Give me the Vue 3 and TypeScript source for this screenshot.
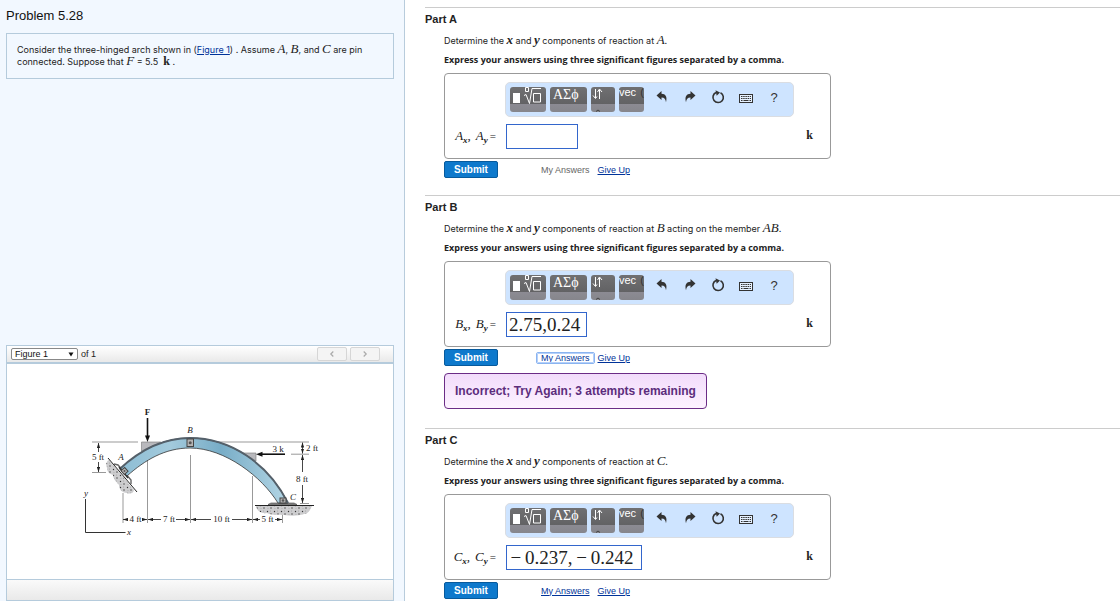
<script setup lang="ts">
import { reactive, ref } from 'vue'

interface Part {
  id: string
  member: string
  suffix: string
  answer: string
  fieldWidth: number
  answersState: 'disabled' | 'focused' | 'link'
  feedback: string
}

const parts = reactive<Part[]>([
  { id: 'A', member: '', suffix: '', answer: '', fieldWidth: 72, answersState: 'disabled', feedback: '' },
  {
    id: 'B',
    member: 'AB',
    suffix: ' acting on the member ',
    answer: '2.75,0.24',
    fieldWidth: 81,
    answersState: 'focused',
    feedback: 'Incorrect; Try Again; 3 attempts remaining',
  },
  { id: 'C', member: '', suffix: '', answer: '−\u20090.237,\u2009−\u20090.242', fieldWidth: 136, answersState: 'link', feedback: '' },
])

const figure = ref('Figure 1')
</script>

<template>
  <div class="page">
    <aside class="problem">
      <h1>Problem 5.28</h1>
      <p class="statement">
        Consider the three-hinged arch shown in (<a href="#figure">Figure 1</a>) . Assume <i class="m">A</i>,
        <i class="m">B</i>, and <i class="m">C</i> are pin connected. Suppose that <i class="m">F</i> = 5.5&nbsp;
        <span class="unit">k</span> .
      </p>

      <section id="figure" class="figure">
        <header class="figure-bar">
          <span class="picker">
            <select v-model="figure" aria-label="Figure">
              <option>Figure 1</option>
            </select>
            <svg class="caret" width="6" height="5" viewBox="0 0 6 5"><path d="M0.5 0.5h5L3 4.5z" fill="#111" /></svg>
          </span>
          <span class="count">of 1</span>
          <button type="button" class="step" aria-label="Previous figure">
            <svg width="6" height="8" viewBox="0 0 6 8"><path d="M4.3 1.5L1.8 4l2.5 2.5" /></svg>
          </button>
          <button type="button" class="step" aria-label="Next figure">
            <svg width="6" height="8" viewBox="0 0 6 8"><path d="M1.7 1.5L4.2 4 1.7 6.5" /></svg>
          </button>
        </header>

        <div class="figure-body">
          <svg class="arch" width="240" height="140" viewBox="80 402 240 140">
            <defs>
              <linearGradient id="steel" x1="0" x2="1" y1="0" y2="0">
                <stop offset="0" stop-color="#8dbdd4" />
                <stop offset="0.3" stop-color="#a3cadc" />
                <stop offset="0.6" stop-color="#78adc7" />
                <stop offset="1" stop-color="#b4d6e5" />
              </linearGradient>
              <pattern id="soil" width="7" height="6" patternUnits="userSpaceOnUse">
                <rect width="7" height="6" fill="#cdcdcf" />
                <circle cx="1.5" cy="1.5" r="0.7" fill="#333" />
                <circle cx="5" cy="4" r="0.8" fill="#555" />
                <circle cx="4.5" cy="1" r="0.4" fill="#777" />
                <circle cx="2" cy="4.5" r="0.4" fill="#888" />
              </pattern>
              <marker id="tip" viewBox="0 0 6 4" refX="6" refY="2" markerWidth="5" markerHeight="3.4" markerUnits="userSpaceOnUse" orient="auto-start-reverse">
                <path d="M0 0L6 2 0 4z" fill="#222" />
              </marker>
            </defs>

            <!-- reference lines -->
            <g stroke="#999" stroke-width="1" fill="none">
              <path d="M92 442h46M92 472.5h14M215 442h94M291 454.2h18M300 503.5h9" />
              <path d="M123 493v30M147.5 455v68M190.5 455v68M252.5 476v47M282.5 515v8" />
            </g>

            <!-- load brackets -->
            <path d="M141.500 442h19l-19 9z" fill="#b9b9bd" stroke="#777" stroke-width="0.6" />
            <path d="M243 453h13v8z" fill="#b9b9bd" stroke="#777" stroke-width="0.6" />

            <!-- ground at A -->
            <path d="M109 460c-3 1-3 5-2 8c0 4 3 6 6 7c1 6 4 7 6 10c0 5 4 8 8 8c3 1 6 1 7-3z" fill="url(#soil)" />
            <path d="M108 458l29 34" stroke="#222" stroke-width="1" />
            <path d="M114 464l4 1 13 15 0 4" fill="none" stroke="#666" stroke-width="1.4" />

            <!-- ground at C -->
            <path d="M256 506c1 5 5 8 11 7c6 3 12 1 17 2c8 1 14 1 20-1c4 0 6-4 8-8z" fill="url(#soil)" />
            <path d="M255 505.500h59" stroke="#222" stroke-width="1.2" />
            <path d="M268 504.500l3-1.500h23l3 1.500z" fill="#888" stroke="#444" stroke-width="0.6" />

            <!-- arch ring -->
            <path
              d="M119.700 469C140 450 163 438 190 438C230 438 268 463 288 503H278C262 477 225 448 190 448C165 448 145 460 127 476z"
              fill="url(#steel)" stroke="#333" stroke-width="0.8"
            />
            <path d="M119.700 469C140 450 163 438 190 438C230 438 268 463 288 503" fill="none" stroke="#54606a" stroke-width="2" />
            <path d="M119 467L128 478" stroke="#333" stroke-width="1.4" />

            <!-- hinges -->
            <g fill="#b4b4b4" stroke="#444" stroke-width="1">
              <rect x="187" y="439" width="6.500" height="7.500" />
              <rect x="122" y="468.500" width="5" height="5" transform="rotate(48 124.500 471)" />
              <rect x="280" y="498" width="6" height="5" />
            </g>
            <g fill="#555">
              <circle cx="190.200" cy="442.700" r="1.500" />
              <circle cx="124.500" cy="471" r="1" />
              <circle cx="283" cy="500.500" r="1.300" />
            </g>

            <!-- loads -->
            <path d="M147.500 418v19" stroke="#111" stroke-width="1.600" />
            <path d="M145 435.500h5l-2.500 6.500z" fill="#111" />
            <path d="M285 454.200h-24" stroke="#111" stroke-width="1.600" />
            <path d="M262.500 451.700v5l-6.500-2.500z" fill="#111" />

            <!-- dimensions -->
            <g stroke="#333" stroke-width="0.9" fill="none">
              <path d="M98.500 452v-9" marker-end="url(#tip)" />
              <path d="M98.500 462v10" marker-end="url(#tip)" />
              <path d="M302.500 442.500v11" marker-start="url(#tip)" marker-end="url(#tip)" />
              <path d="M302.500 472v-17" marker-end="url(#tip)" />
              <path d="M302.500 485v18" marker-end="url(#tip)" />
              <path d="M128 519.500h-5" marker-end="url(#tip)" />
              <path d="M142 519.500h5" marker-end="url(#tip)" />
              <path d="M161 519.500h-13" marker-end="url(#tip)" />
              <path d="M176 519.500h14" marker-end="url(#tip)" />
              <path d="M211 519.500h-20" marker-end="url(#tip)" />
              <path d="M232 519.500h20" marker-end="url(#tip)" />
              <path d="M260 519.500h-7" marker-end="url(#tip)" />
              <path d="M275 519.500h7" marker-end="url(#tip)" />
            </g>

            <path d="M85.500 499v33.500h40" fill="none" stroke="#333" stroke-width="1" />

            <g class="labels">
              <text x="147.500" y="415" class="b">F</text>
              <text x="190" y="433" class="i">B</text>
              <text x="121" y="460" class="i">A</text>
              <text x="293" y="500" class="i">C</text>
              <text x="86" y="496" class="i">y</text>
              <text x="129" y="535" class="i">x</text>
              <text x="98" y="460">5 ft</text>
              <text x="278" y="452">3 k</text>
              <text x="312" y="451">2 ft</text>
              <text x="302" y="482">8 ft</text>
              <text x="135.500" y="522">4 ft</text>
              <text x="169" y="522">7 ft</text>
              <text x="221.500" y="522">10 ft</text>
              <text x="267.500" y="522">5 ft</text>
            </g>
          </svg>
        </div>
        <footer class="figure-foot"></footer>
      </section>
    </aside>

    <main class="parts">
      <section v-for="part in parts" :key="part.id" class="part">
        <h2>Part {{ part.id }}</h2>
        <p class="ask">
          Determine the <i class="m v">x</i> and <i class="m v">y</i> components of reaction at
          <i class="m">{{ part.id }}</i>{{ part.suffix }}<i v-if="part.member" class="m">{{ part.member }}</i>.
        </p>
        <p class="ask strong">Express your answers using three significant figures separated by a comma.</p>

        <form class="answer" @submit.prevent>
          <div class="box">
            <div class="toolbar">
              <button type="button" class="tile root" aria-label="Templates">
                <svg width="36" height="25" viewBox="0 0 36 25">
                  <rect x="3" y="6" width="7" height="10" fill="#fff" />
                  <path d="M14 8.500l2-1 3.500 9L22 1.500h9" fill="none" stroke="#fff" stroke-width="1" />
                  <path d="M15.500 0.500h3v4h-3zM23.500 6.500h7v8.500h-7z" fill="none" stroke="#fff" stroke-width="1" />
                </svg>
              </button>
              <button type="button" class="tile greek">ΑΣϕ</button>
              <button type="button" class="tile arrows" aria-label="Subscripts and arrows">
                <svg width="24" height="25" viewBox="0 0 24 25">
                  <g fill="none" stroke="#fff" stroke-width="1">
                    <path d="M4.500 2v9M2 8.500l2.500 3 1.500-2M8.500 12V3M6.500 5l2-3 2.500 3" />
                  </g>
                  <path d="M5 24.500l2-1.500 2 1.500" fill="none" stroke="#444" />
                </svg>
              </button>
              <button type="button" class="tile vec">vec <span>(</span></button>
              <button type="button" class="tool" aria-label="Undo">
                <svg width="14" height="14" viewBox="0 0 14 14">
                  <path d="M1.500 5.500L6.500 1v2.800C10.500 4 12.500 6.500 11 12.200C10.600 9 9.500 7.500 6.500 7.400V10z" fill="#333" />
                </svg>
              </button>
              <button type="button" class="tool" aria-label="Redo">
                <svg width="14" height="14" viewBox="0 0 14 14">
                  <path d="M12.500 5.500L7.500 1v2.800C3.500 4 1.500 6.500 3 12.200C3.400 9 4.500 7.500 7.500 7.400V10z" fill="#333" />
                </svg>
              </button>
              <button type="button" class="tool" aria-label="Reset">
                <svg width="14" height="14" viewBox="0 0 14 14">
                  <path d="M9.500 2.700A5.200 5.200 0 1 1 5 2.600" fill="none" stroke="#333" stroke-width="1.600" />
                  <path d="M4.500 0.200L9 2.400 5.700 5.800z" fill="#333" />
                </svg>
              </button>
              <button type="button" class="tool" aria-label="Keyboard">
                <svg width="16" height="14" viewBox="0 0 16 14">
                  <rect x="1.500" y="4.500" width="13" height="8" fill="#e6f1ff" stroke="#333" />
                  <path d="M3 6.500h10M3 8.500h10" stroke="#333" stroke-width="1" stroke-dasharray="1.500 0.700" />
                  <path d="M3 10.500h1.500M5.500 10.500h5M11.500 10.500h1.500" stroke="#333" />
                </svg>
              </button>
              <button type="button" class="tool help">?</button>
            </div>

            <div class="entry">
              <label :for="'answer-' + part.id">
                <i>{{ part.id }}<sub>x</sub></i><span class="comma">,</span>
                <i>{{ part.id }}<sub>y</sub></i><span class="eq">=</span>
              </label>
              <input :id="'answer-' + part.id" v-model="part.answer" type="text" :style="{ width: part.fieldWidth + 'px' }" />
              <span class="unit">k</span>
            </div>
          </div>

          <div class="actions">
            <button type="submit" class="submit">Submit</button>
            <span v-if="part.answersState === 'disabled'" class="mine off">My Answers</span>
            <a v-else href="#answers" class="mine" :class="{ focused: part.answersState === 'focused' }">My Answers</a>
            <a href="#giveup">Give Up</a>
          </div>
        </form>

        <p v-if="part.feedback" class="feedback" role="status">{{ part.feedback }}</p>
      </section>
    </main>
  </div>
</template>

<style>
body {
  margin: 0;
  background: #fff;
}
</style>

<style scoped>
.page {
  display: grid;
  grid-template-columns: 405px 1fr;
  min-height: 100vh;
  font-family: "Liberation Sans", Arial, sans-serif;
  font-size: 9px;
  color: #222;
}
h1, h2, p {
  margin: 0;
}
button, input, select {
  font-family: inherit;
  box-sizing: border-box;
}
a {
  color: #039;
}
.problem {
  display: flex;
  flex-direction: column;
  box-sizing: border-box;
  padding: 8px 10px 0 6px;
  background: #f2f8ff;
  border-right: 1px solid #b8ccdc;
}
h1 {
  font-size: 13px;
  line-height: 15px;
  font-weight: 400;
  color: #111;
}
.statement, .ask {
  font-family: Inter, "Liberation Sans", sans-serif;
  font-size: 9px;
}
.statement {
  margin-top: 10px;
  padding: 10px 20px 10px 10px;
  border: 1px solid #b5cbdc;
  line-height: 12px;
}
.m {
  font-family: "Liberation Serif", serif;
  font-size: 13px;
  line-height: 10px;
}
.v {
  font-weight: 700;
}
.unit {
  font-family: "Liberation Serif", serif;
  font-size: 12px;
  line-height: 10px;
  font-weight: 700;
}
.figure {
  margin-top: auto;
  border: 1px solid #b5cbdc;
}
.figure-bar {
  display: flex;
  align-items: center;
  gap: 3px;
  height: 16px;
  padding: 0 13px 0 4px;
  background: linear-gradient(#fff, #e9e9e9);
  border-bottom: 2px solid #b5cbdc;
}
.picker {
  display: grid;
  align-items: center;
}
.picker > * {
  grid-area: 1 / 1;
}
.picker select {
  appearance: none;
  width: 67px;
  height: 12px;
  padding: 0 3px;
  border: 1px solid #888;
  border-radius: 2px;
  background: #fff;
  color: #111;
  font-size: 9px;
  line-height: 10px;
}
.caret {
  justify-self: end;
  margin-right: 4px;
  pointer-events: none;
}
.count {
  flex: 1;
}
.step {
  display: flex;
  align-items: center;
  justify-content: center;
  width: 30px;
  height: 14px;
  padding: 0;
  border: 1px solid #d6d6d6;
  border-radius: 2px;
  background: #f4f4f4;
}
.step path {
  fill: none;
  stroke: #aaa;
  stroke-width: 1.2;
}
.figure-body {
  display: flex;
  align-items: center;
  justify-content: center;
  height: 215px;
  background: #fff;
  border-bottom: 1px solid #b5cbdc;
}
.figure-foot {
  height: 20px;
  background: linear-gradient(#fafafa, #e9e9e9);
}
.labels {
  font-family: "Liberation Serif", serif;
  font-size: 9px;
  fill: #222;
  text-anchor: middle;
}
.labels .i {
  font-style: italic;
}
.labels .b {
  font-weight: 700;
}
.parts {
  padding: 7px 0 0 20px;
}
.part {
  padding: 4px 0 17px 19px;
  border-top: 1px solid #ccc;
}
.part:last-child {
  padding-bottom: 0;
}
h2 {
  margin-left: -19px;
  padding-bottom: 1px;
  font-size: 11px;
  line-height: 14px;
}
.ask {
  margin-top: 7px;
  line-height: 13px;
}
.strong {
  margin-top: 6px;
  font-family: "Open Sans", "Liberation Sans", sans-serif;
  font-weight: 700;
}
.answer {
  margin-top: 7px;
}
.box {
  width: 387px;
  box-sizing: border-box;
  padding: 8px 17px 9px 8px;
  border: 1px solid #999;
  border-radius: 4px;
}
.toolbar {
  display: flex;
  align-items: flex-start;
  gap: 4px;
  width: 289px;
  height: 35px;
  box-sizing: border-box;
  margin-left: 52px;
  padding: 4px;
  background: #cee4ff;
  border: 1px solid #dadde2;
  border-radius: 5px;
}
.tile {
  display: flex;
  height: 25px;
  padding: 0;
  border: 0;
  border-radius: 3px;
  overflow: hidden;
  background: linear-gradient(#707072, #626264 17px, #8c8b93 17px, #86868c);
  color: #fff;
}
.root {
  width: 36px;
}
.greek {
  width: 37px;
  padding: 0 3px;
  font-family: "Liberation Serif", serif;
  font-size: 14px;
  line-height: 16px;
}
.arrows {
  width: 24px;
}
.vec {
  width: 25px;
  gap: 4px;
  font-size: 11px;
  line-height: 11px;
}
.vec span {
  color: #333;
}
.tool {
  display: flex;
  align-items: center;
  justify-content: center;
  width: 24px;
  height: 20px;
  padding: 0;
  border: 0;
  background: none;
  color: #333;
}
.vec + .tool {
  margin-left: 2px;
}
.help {
  font-size: 13px;
}
.entry {
  display: grid;
  grid-template-columns: 43px 1fr auto;
  align-items: center;
  column-gap: 10px;
  margin-top: 7px;
}
.entry label {
  display: flex;
  justify-content: flex-end;
  align-items: baseline;
  padding-bottom: 2px;
  font-family: "Liberation Serif", serif;
  font-size: 13px;
  line-height: 16px;
  white-space: nowrap;
}
.entry .unit {
  padding-bottom: 4px;
}
.entry sub {
  font-size: 9px;
  font-weight: 700;
  line-height: 8px;
  vertical-align: -3px;
}
.comma {
  margin-right: 5px;
}
.eq {
  margin-left: 2px;
  font-size: 11px;
}
.entry input {
  height: 25px;
  padding: 0 4px 0 0;
  border: 1px solid #36c;
  background: #fff;
  color: #222;
  font-family: "Liberation Serif", serif;
  font-size: 19px;
  text-align: center;
}
.actions {
  display: flex;
  align-items: center;
  margin-top: 2px;
}
.submit {
  width: 54px;
  height: 17px;
  margin-right: 38px;
  padding: 0;
  border: 1px solid #075a9c;
  border-radius: 2px;
  background: #0e79cc;
  color: #fff;
  font-size: 10px;
  font-weight: 700;
}
.mine {
  margin-right: 3px;
  padding: 0 4px;
  border: 1px solid transparent;
  border-radius: 2px;
  line-height: 10px;
}
.off {
  color: #666;
}
.focused {
  border-color: #8ab4f0;
  outline: 1px solid #b5d0fa;
  outline-offset: -2px;
}
.feedback {
  width: fit-content;
  margin: 7px 0 2px;
  padding: 9px 10px;
  border: 1px solid #6b2c86;
  border-radius: 4px;
  background: linear-gradient(#f2dcfb, #fdf2ff);
  color: #5c2d7c;
  font-size: 12px;
  font-weight: 700;
  line-height: 16px;
}
</style>
